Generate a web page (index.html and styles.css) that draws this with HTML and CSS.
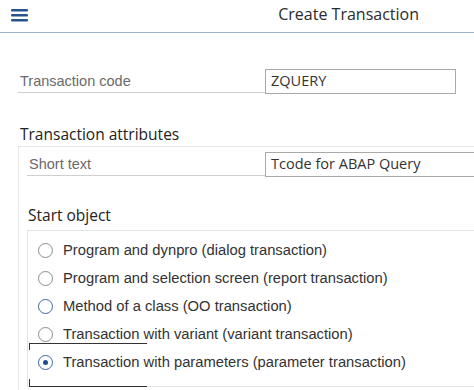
FILE: index.html
```html
<!DOCTYPE html>
<html lang="en">
<head>
    <meta charset="UTF-8">
    <meta name="viewport" content="width=device-width, initial-scale=1.0">
    <title>Create Transaction</title>
    <link rel="stylesheet" href="styles.css">
</head>
<body>
    <div class="header">
        <svg class="menu" width="18" height="14" viewBox="0 0 18 14">
            <rect x="0" y="1" width="17" height="2.4" rx="1" fill="#27548f"/>
            <rect x="0" y="6" width="17" height="2.4" rx="1" fill="#27548f"/>
            <rect x="0" y="11" width="17" height="2.4" rx="1" fill="#27548f"/>
        </svg>
        <div class="title">Create Transaction</div>
    </div>

    <div class="content">
        <div class="field first">
            <div class="label">Transaction code</div>
            <div class="input short">ZQUERY</div>
        </div>

        <div class="section-title">Transaction attributes</div>
        <div class="group">
            <div class="field inner">
                <div class="label">Short text</div>
                <div class="input wide">Tcode for ABAP Query</div>
            </div>

            <div class="section-title sub">Start object</div>
            <div class="start-box">
                <div class="option"><span class="radio"></span>Program and dynpro (dialog transaction)</div>
                <div class="option"><span class="radio"></span>Program and selection screen (report transaction)</div>
                <div class="option"><span class="radio hover"></span>Method of a class (OO transaction)</div>
                <div class="option"><span class="radio"></span>Transaction with variant (variant transaction)</div>
                <div class="option"><span class="radio checked"></span>Transaction with parameters (parameter transaction)</div>
                <div class="focus-frame"></div>
            </div>
        </div>
    </div>
</body>
</html>
```

FILE: styles.css
```css
body {
    margin: 0;
    background-color: #fff;
    font-family: 'Liberation Sans', Arial, sans-serif;
    overflow: hidden;
    width: 474px;
    height: 390px;
}

.header {
    display: flex;
    align-items: center;
    height: 32px;
    border-bottom: 1px solid #9fb0c9;
}

.menu {
    margin-left: 11px;
    margin-top: -2px;
}

.title {
    margin-left: auto;
    margin-right: 55px;
    font-family: 'Open Sans', sans-serif;
    font-size: 16px;
    color: #2b2b2b;
    margin-top: -4px;
}

.content {
    padding-left: 18px;
    height: 357px;
    overflow: hidden;
}

.field {
    display: flex;
    height: 24px;
}

.field.first {
    padding-top: 36px;
}

.label {
    flex-shrink: 0;
    width: 245px;
    border-bottom: 1px solid #cfcfcf;
    font-size: 14.5px;
    color: #6a6a6a;
    padding-left: 2px;
    line-height: 24px;
}

.input {
    flex-shrink: 0;
    border: 1px solid #a9a9a9;
    box-sizing: border-box;
    height: 25px;
    padding-left: 5px;
    font-family: 'Open Sans', sans-serif;
    font-size: 14.5px;
    line-height: 22px;
    color: #333;
}

.input.short {
    width: 191px;
}

.input.wide {
    width: 260px;
}

.section-title {
    font-family: 'Open Sans', sans-serif;
    font-size: 15.5px;
    color: #222;
    margin-top: 31px;
    margin-left: 2px;
    line-height: 20px;
}

.group {
    margin-top: 2px;
    border: 1px solid #e6e6e6;
    border-right: none;
    border-bottom: none;
    padding: 5px 0 0 8px;
    height: 260px;
}

.field.inner .label {
    width: 236px;
}

.section-title.sub {
    margin-top: 29px;
    margin-left: 1px;
}

.start-box {
    position: relative;
    margin-top: 5px;
    border: 1px solid #e3e3e3;
    border-right: none;
    padding: 5px 0 10px 0;
}

.option {
    display: flex;
    align-items: center;
    height: 28px;
    font-size: 14.75px;
    color: #333;
}

.radio {
    flex-shrink: 0;
    width: 13px;
    height: 13px;
    border: 1px solid #8c8c8c;
    border-radius: 50%;
    margin-left: 10px;
    margin-right: 10px;
    position: relative;
}

.radio.hover {
    border-color: #3d679e;
}

.radio.checked {
    border-color: #3d679e;
}

.radio.checked::after {
    content: "";
    position: absolute;
    left: 4px;
    top: 4px;
    width: 5px;
    height: 5px;
    border-radius: 50%;
    background-color: #1f4f8f;
}

.focus-frame {
    position: absolute;
    left: 1px;
    top: 112px;
    width: 118px;
    height: 42px;
    border-top: 1px solid #333;
    border-bottom: 1px solid #333;
}

.focus-frame::before,
.focus-frame::after {
    content: "";
    position: absolute;
    left: 0;
    width: 1px;
    background-color: #333;
}

.focus-frame::before {
    top: 0;
    height: 6px;
}

.focus-frame::after {
    bottom: 0;
    height: 7px;
}
```
